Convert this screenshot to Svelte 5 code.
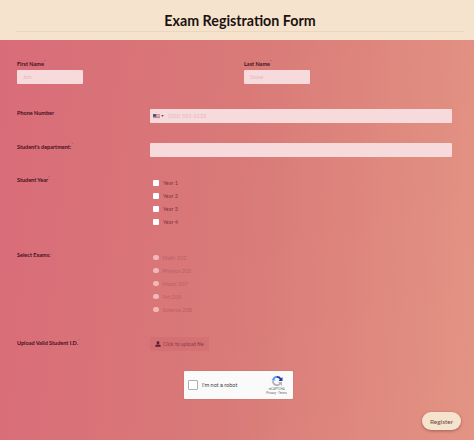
<script lang="ts">
  const years = ["Year 1", "Year 2", "Year 3", "Year 4"];
  const exams = ["Math 202", "Physics 205", "Music 207", "Art 205", "Science 208"];
</script>

<header class="top">
  <h1>Exam Registration Form</h1>
</header>

<form class="form">
  <div class="names">
    <div class="name">
      <span class="label">First Name<sup>*</sup></span>
      <div class="input short"><span class="hint">Jon</span></div>
    </div>
    <div class="name">
      <span class="label">Last Name<sup>*</sup></span>
      <div class="input short"><span class="hint">Snow</span></div>
    </div>
  </div>

  <div class="row phone">
    <span class="label">Phone Number</span>
    <div class="input">
      <svg class="flag" viewBox="0 0 12 8" width="7" height="5">
        <rect width="12" height="8" fill="#e8d9de" />
        <path d="M0 1h12M0 3.4h12M0 5.8h12" stroke="#b5495e" stroke-width="1" />
        <rect width="5.4" height="4.4" fill="#47506f" />
      </svg>
      <svg class="caret" viewBox="0 0 4 3" width="3" height="2"><path d="M0 0h4L2 3z" fill="#7b4a55" /></svg>
      <span class="hint">(201) 555-0123</span>
    </div>
  </div>

  <div class="row dept">
    <span class="label">Student's department:<sup>*</sup></span>
    <div class="input"></div>
  </div>

  <div class="row year">
    <span class="label">Student Year<sup>*</sup></span>
    <div class="options">
      {#each years as y}
        <div class="opt"><span class="box"></span><span class="opt-text">{y}</span></div>
      {/each}
    </div>
  </div>

  <div class="row exams">
    <span class="label">Select Exams:</span>
    <div class="options">
      {#each exams as e}
        <div class="opt"><span class="dot"></span><span class="opt-text faded">{e}</span></div>
      {/each}
    </div>
  </div>

  <div class="row upload">
    <span class="label">Upload Valid Student I.D.<sup>*</sup></span>
    <div class="file">
      <svg viewBox="0 0 12 12" width="6" height="6">
        <circle cx="6" cy="3.4" r="2.9" fill="#5a1f2a" />
        <path d="M0.6 11.6v-2c0-1.8 3-2.8 5.4-2.8s5.4 1 5.4 2.8v2z" fill="#5a1f2a" />
      </svg>
      <span>Click to upload file</span>
    </div>
  </div>

  <div class="captcha">
    <span class="check"></span>
    <span class="robot">I'm not a robot</span>
    <div class="brand">
      <svg viewBox="0 0 24 24" width="12" height="12">
        <path d="M12 2a10 10 0 0 1 8.5 4.7L23 4v8h-8l2.6-2.6A6.5 6.5 0 0 0 12 5.5z" fill="#1c3aa9" />
        <path d="M2 12a10 10 0 0 1 10-10v3.5A6.5 6.5 0 0 0 6.6 8.4L9 11H1z" fill="#4a90f5" />
        <path d="M2 12h3.5a6.5 6.5 0 0 0 11 4.6L14 14h8v8l-2.9-2.8A10 10 0 0 1 2 12z" fill="#b5b5b5" />
      </svg>
      <span class="mini">reCAPTCHA</span>
      <span class="mini">Privacy - Terms</span>
    </div>
  </div>

  <div class="actions">
    <button type="button" class="register">Register</button>
  </div>
</form>

<style>
  :global(body) {
    margin: 0;
    font-family: "Lato", "Open Sans", sans-serif;
  }

  .top {
    height: 40px;
    box-sizing: border-box;
    padding: 0 10px 0 16px;
    background: #f5e3cd;
  }

  h1 {
    margin: 0;
    height: 31.5px;
    box-sizing: border-box;
    padding-top: 12px;
    text-align: center;
    font-size: 14.25px;
    line-height: 18px;
    font-weight: 700;
    color: #1b1210;
    border-bottom: 0.5px solid #ead7bf;
  }

  .form {
    height: 400px;
    box-sizing: border-box;
    padding: 21px 22px 0 17px;
    background: linear-gradient(95deg, #d96c79 0%, #d97a78 50%, #e39484 100%);
    color: #43101c;
  }

  .label {
    font-size: 5.5px;
    line-height: 7px;
    font-weight: 700;
    color: #46101e;
  }

  sup {
    font-size: 4px;
    line-height: 0;
    color: #a44050;
  }

  .names {
    display: grid;
    grid-template-columns: 227px 1fr;
  }

  .name {
    display: flex;
    flex-direction: column;
    gap: 2px;
  }

  .input {
    height: 14px;
    box-sizing: border-box;
    display: flex;
    align-items: center;
    padding-left: 3px;
    background: #f6dadc;
    border-radius: 1px;
  }

  .short {
    width: 66px;
    padding-left: 6px;
  }

  .hint {
    font-size: 5.5px;
    color: #e3b8bf;
  }

  .row {
    display: grid;
    grid-template-columns: 133px 1fr;
  }

  .phone {
    margin-top: 25px;
  }

  .phone .label,
  .dept .label {
    padding-top: 1px;
  }

  .flag {
    margin-right: 1px;
  }

  .caret {
    margin-right: 4px;
  }

  .dept {
    margin-top: 20px;
  }

  .year {
    margin-top: 20px;
  }

  .options {
    display: flex;
    flex-direction: column;
    margin-top: -1px;
    padding-left: 3px;
  }

  .opt {
    height: 13px;
    display: flex;
    align-items: center;
    gap: 4px;
  }

  .box {
    width: 6px;
    height: 6px;
    background: #fff;
    border-radius: 1px;
  }

  .dot {
    width: 5.5px;
    height: 5.5px;
    border-radius: 50%;
    background: #f2b8b8;
  }

  .opt-text {
    font-size: 5.5px;
    color: #7e3442;
  }

  .faded {
    color: #b85f68;
  }

  .exams {
    margin-top: 24px;
  }

  .upload {
    margin-top: 22px;
  }

  .upload .label {
    padding-top: 2px;
  }

  .file {
    width: 59px;
    height: 14px;
    box-sizing: border-box;
    margin-top: -1px;
    display: flex;
    align-items: center;
    gap: 2px;
    padding-left: 5px;
    font-size: 5px;
    color: #8c3a48;
    background: rgba(200, 90, 100, 0.25);
    border-radius: 1px;
  }

  .captcha {
    width: 109px;
    height: 28px;
    box-sizing: border-box;
    margin: 20px 0 0 167px;
    padding: 0 4px;
    display: flex;
    align-items: center;
    font-family: "Roboto", sans-serif;
    background: #fafafa;
    border-radius: 1px;
    box-shadow: 0 0 1px rgba(0, 0, 0, 0.3);
  }

  .check {
    width: 10px;
    height: 10px;
    box-sizing: border-box;
    background: #fff;
    border: 0.7px solid #b0b0b0;
    border-radius: 1px;
  }

  .robot {
    margin-left: 4px;
    font-size: 5.5px;
    color: #444;
  }

  .brand {
    margin-left: auto;
    display: flex;
    flex-direction: column;
    align-items: center;
    width: 25px;
  }

  .mini {
    font-size: 3px;
    line-height: 4px;
    color: #666;
    white-space: nowrap;
  }

  .actions {
    display: flex;
    justify-content: flex-end;
    margin-top: 13px;
    margin-right: -9px;
  }

  .register {
    width: 39px;
    height: 18px;
    padding: 0;
    border: 0;
    border-radius: 9px;
    font-family: "Lato", sans-serif;
    font-size: 6.5px;
    color: #6b4a3a;
    background: #f5e3cd;
    box-shadow: 0 1px 3px rgba(90, 30, 30, 0.45);
  }
</style>
